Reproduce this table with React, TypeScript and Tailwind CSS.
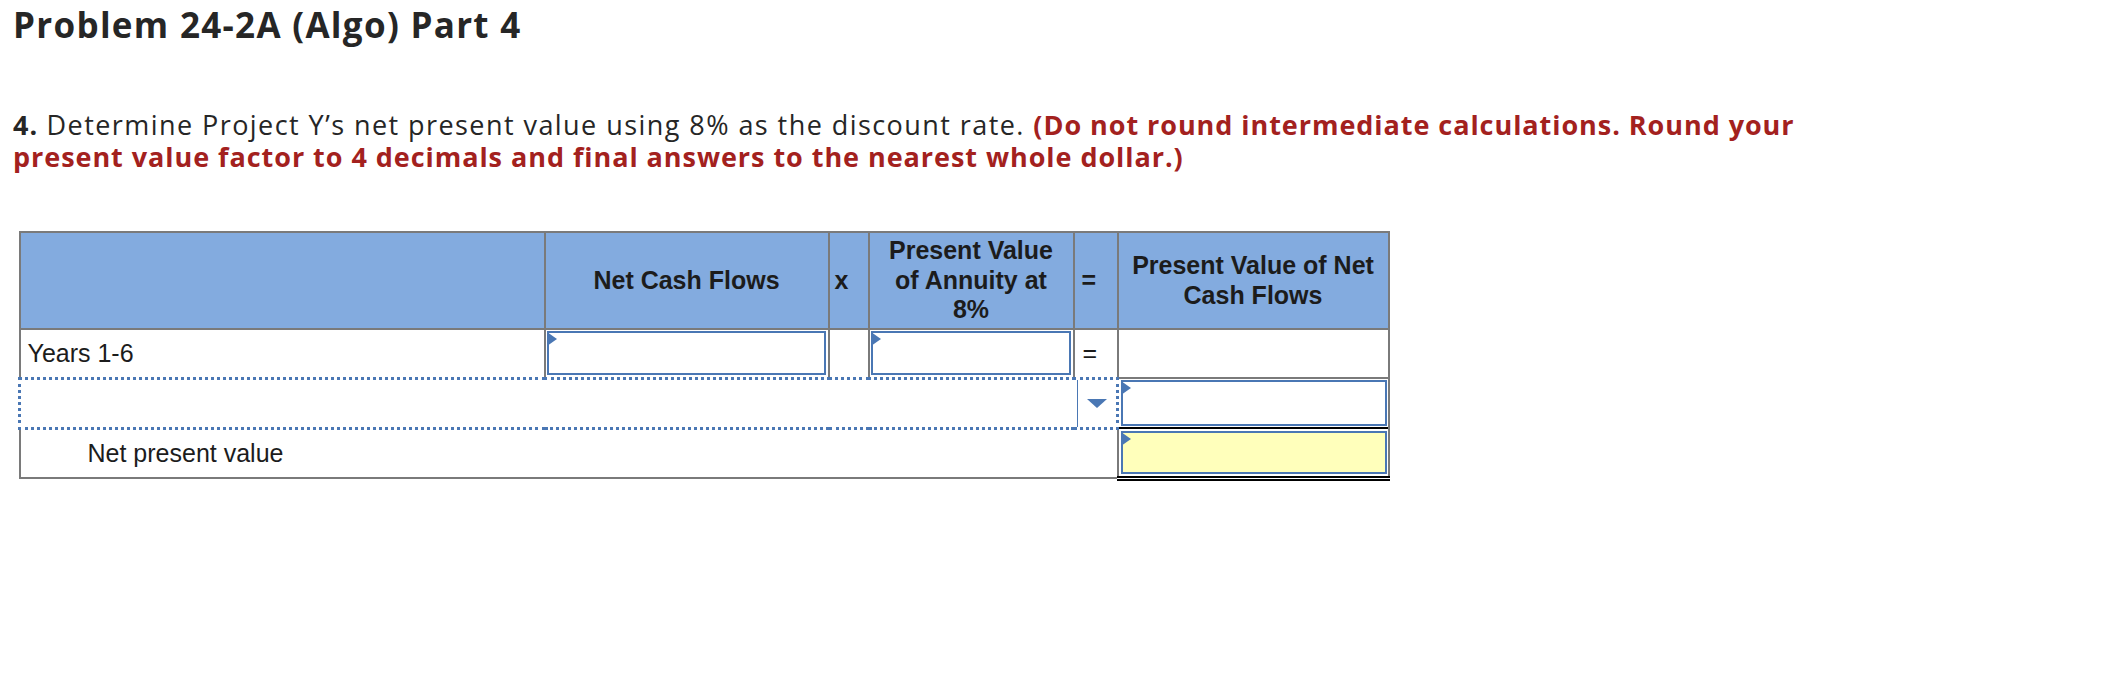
import React from 'react';

const AnswerBox: React.FC<{ yellow?: boolean; className?: string }> = ({ yellow, className }) => (
  <div
    className={`relative border-2 border-[#4a77b4] ${yellow ? 'bg-[#ffffbb]' : 'bg-white'} ${className ?? ''}`}
  >
    {/* little flag marker in the corner */}
    <span className="absolute -left-[2px] -top-[1px] h-0 w-0 border-y-[7px] border-l-[10px] border-y-transparent border-l-[#4a77b4]" />
  </div>
);

const cell = 'border-2 border-[#7a7a7a]';

const App: React.FC = () => {
  return (
    <div className="min-h-screen bg-white pl-[13px] pt-[4px] text-[#222]">
      <h1 className="font-['Open_Sans','Lato',sans-serif] text-[35px] font-bold leading-[42px] tracking-[1.3px] text-[#262626]">
        Problem 24-2A (Algo) Part 4
      </h1>

      <div className="mt-[63px] font-['Open_Sans','Lato',sans-serif] text-[27px] leading-[32px] text-[#262626]">
        <p className="flex whitespace-pre">
          <span className="font-bold tracking-[0.95px]">4.</span>
          <span className="tracking-[1.44px]"> Determine Project Y’s net present value using 8% as the discount rate. </span>
          <span className="font-bold tracking-[0.95px] text-[#a3211e]">
            (Do not round intermediate calculations. Round your
          </span>
        </p>
        <p className="font-bold tracking-[0.95px] text-[#a3211e]">
          present value factor to 4 decimals and final answers to the nearest whole dollar.)
        </p>
      </div>

      <table className="ml-[5px] mt-[58px] table-fixed border-collapse font-['Liberation_Sans',Arial,sans-serif] text-[25px] text-[#1c1c1c]">
        <colgroup>
          <col className="w-[525px]" />
          <col className="w-[284px]" />
          <col className="w-[40px]" />
          <col className="w-[205px]" />
          <col className="w-[44px]" />
          <col className="w-[271px]" />
        </colgroup>
        <thead>
          <tr className="bg-[#83abdf] font-bold leading-[29.5px]">
            <th className={`${cell} h-[97px]`} />
            <th className={`${cell} text-center`}>Net Cash Flows</th>
            <th className={`${cell} pl-[5px] text-left`}>x</th>
            <th className={`${cell} text-center`}>
              Present Value
              <br />
              of Annuity at
              <br />
              8%
            </th>
            <th className={`${cell} pl-[7px] text-left`}>=</th>
            <th className={`${cell} text-center`}>
              Present Value of Net
              <br />
              Cash Flows
            </th>
          </tr>
        </thead>
        <tbody>
          <tr>
            <td className={`${cell} h-[49px] pl-[7px]`}>Years 1-6</td>
            <td className={`${cell} p-[1px] pr-[2px]`}>
              <AnswerBox className="h-[44px]" />
            </td>
            <td className={cell} />
            <td className={`${cell} p-[1px] pr-[2px]`}>
              <AnswerBox className="h-[44px]" />
            </td>
            <td className={`${cell} pl-[8px]`}>=</td>
            <td className={cell} />
          </tr>
          <tr>
            <td colSpan={5} className="h-[50px] border-[3px] border-dotted border-[#4a77b4] p-0">
              <div className="flex h-[47px]">
                <div className="flex-1 border-r border-[#4a77b4] bg-white" />
                <div className="flex w-[38px] items-center justify-center">
                  <span className="h-0 w-0 border-x-[10px] border-t-[9px] border-x-transparent border-t-[#4a77b4]" />
                </div>
              </div>
            </td>
            <td className="h-[50px] border-2 border-[#7a7a7a] border-b-black p-[1px] pl-[2px]">
              <AnswerBox className="h-[46px]" />
            </td>
          </tr>
          <tr>
            <td colSpan={5} className={`${cell} h-[50px] pl-[67px]`}>
              Net present value
            </td>
            <td className="border-2 border-[#7a7a7a] border-t-black border-b-[5px] border-b-black border-double p-[1px] pl-[2px]">
              <AnswerBox yellow className="h-[43px]" />
            </td>
          </tr>
        </tbody>
      </table>
    </div>
  );
};

export default App;
